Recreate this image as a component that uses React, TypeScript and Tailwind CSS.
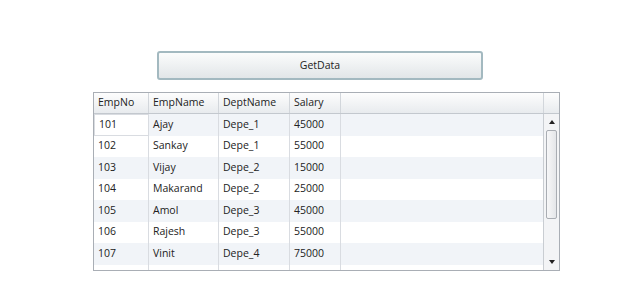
import React from 'react'

const rows = [
  ['101', 'Ajay', 'Depe_1', '45000'],
  ['102', 'Sankay', 'Depe_1', '55000'],
  ['103', 'Vijay', 'Depe_2', '15000'],
  ['104', 'Makarand', 'Depe_2', '25000'],
  ['105', 'Amol', 'Depe_3', '45000'],
  ['106', 'Rajesh', 'Depe_3', '55000'],
  ['107', 'Vinit', 'Depe_4', '75000'],
]

const widths = ['w-[55px]', 'w-[70px]', 'w-[71px]', 'w-[51px]']

const App = () => {
  return (
    <div className="w-[624px] h-[293px] bg-white font-['Open_Sans',sans-serif] text-[10.5px] text-[#222] overflow-hidden">
      <button className="ml-[157px] mt-[51px] w-[326px] h-[29px] rounded-[3px] border-2 border-[#a3b9c0] bg-gradient-to-b from-[#fbfcfc] to-[#e2e6e8] flex items-center justify-center text-[10.5px] text-[#222]">
        GetData
      </button>

      <div className="ml-[93px] mt-[12px] w-[467px] h-[179px] border border-[#a9aeb5] flex flex-col">
        <div className="flex h-[21px] shrink-0 bg-gradient-to-b from-[#fdfdfd] to-[#e8ebee] border-b border-[#c3c8ce]">
          {['EmpNo', 'EmpName', 'DeptName', 'Salary'].map((h, i) => (
            <div key={h} className={`${widths[i]} shrink-0 px-1 flex items-center border-r border-[#d2d6db]`}>
              {h}
            </div>
          ))}
          <div className="flex-1 border-r border-[#d2d6db]"></div>
          <div className="w-[15px] shrink-0"></div>
        </div>

        <div className="flex flex-1 min-h-0">
          <div className="flex-1 flex flex-col">
            {rows.map((r, ri) => (
              <div key={r[0]} className={`flex h-[21.5px] shrink-0 ${ri % 2 === 0 ? 'bg-[#f1f4f8]' : 'bg-white'}`}>
                {r.map((c, ci) => (
                  <div
                    key={ci}
                    className={`${widths[ci]} shrink-0 px-1 flex items-center border-r border-[#d9dce1] ${
                      ri === 0 && ci === 0 ? 'border border-[#a9cbe0] bg-white' : ''
                    }`}
                  >
                    {c}
                  </div>
                ))}
                <div className="flex-1"></div>
              </div>
            ))}
            <div className="flex flex-1">
              {widths.map((w) => (
                <div key={w} className={`${w} shrink-0 border-r border-[#d9dce1]`}></div>
              ))}
            </div>
          </div>

          <div className="w-[16px] shrink-0 border-l border-[#c9cdd2] bg-[#f3f4f6] flex flex-col items-center">
            <div className="h-[16px] w-full flex items-center justify-center">
              <div className="w-0 h-0 border-l-[3px] border-r-[3px] border-b-[4px] border-l-transparent border-r-transparent border-b-[#222]"></div>
            </div>
            <div className="w-[11px] h-[89px] rounded-[2px] border border-[#a9adb3] bg-gradient-to-r from-[#f7f7f8] to-[#e4e6e9]"></div>
            <div className="flex-1"></div>
            <div className="h-[16px] w-full flex items-center justify-center">
              <div className="w-0 h-0 border-l-[3px] border-r-[3px] border-t-[4px] border-l-transparent border-r-transparent border-t-[#222]"></div>
            </div>
          </div>
        </div>
      </div>
    </div>
  )
}

export default App
